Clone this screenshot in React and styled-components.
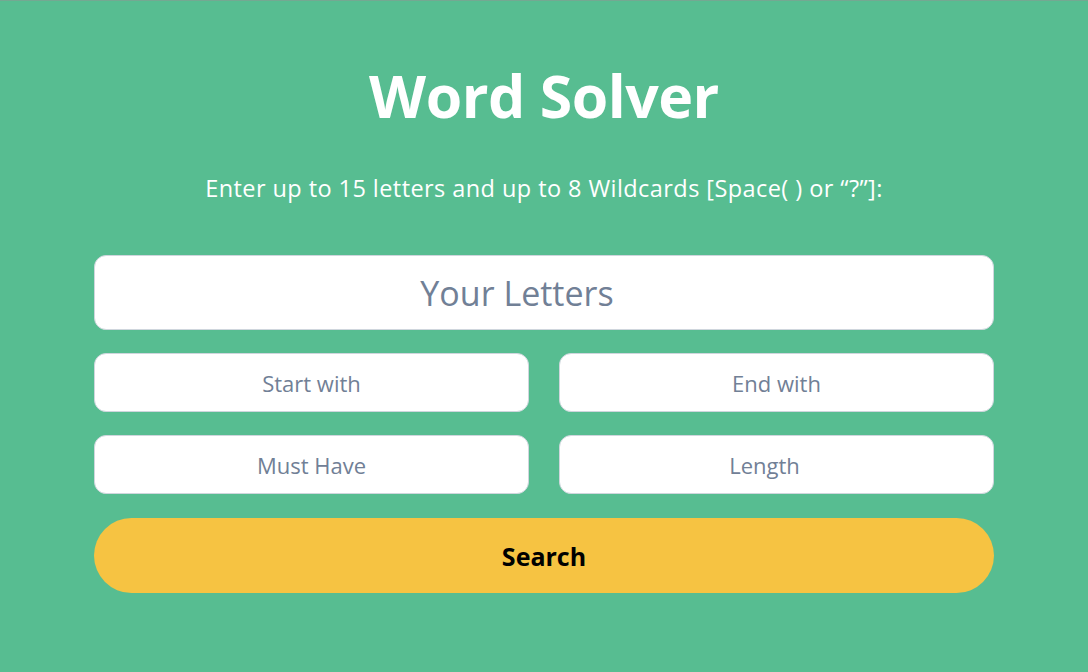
import React from "react";
import styled, { createGlobalStyle } from "styled-components";

const Global = createGlobalStyle`
  html, body { margin: 0; padding: 0; }
  body {
    background: #57bd91;
    font-family: "Open Sans", "Noto Sans", "Liberation Sans", sans-serif;
  }
  * { box-sizing: border-box; }
`;

const Page = styled.main`
  min-height: 672px;
  background: #57bd91;
  border-top: 1px solid #74a892;
  display: flex;
  flex-direction: column;
  align-items: center;
  padding-top: 54px;
`;

const Title = styled.h1`
  margin: 0;
  color: #ffffff;
  font-size: 59px;
  font-weight: 700;
  line-height: 80px;
  letter-spacing: -0.5px;
`;

const Subtitle = styled.p`
  margin: 38px 0 0;
  color: #ffffff;
  font-size: 23.5px;
  line-height: 30px;
  letter-spacing: 0.43px;
`;

const Form = styled.form`
  width: 900px;
  margin-top: 52px;
  display: flex;
  flex-direction: column;
  gap: 23px;
`;

const Row = styled.div`
  display: grid;
  grid-template-columns: 1fr 1fr;
  column-gap: 30px;
`;

const Field = styled.input`
  width: 100%;
  height: ${(p) => (p.$big ? "75px" : "59px")};
  border: 1px solid #cfd6dd;
  border-radius: 12px;
  background: #ffffff;
  text-align: center;
  font-family: inherit;
  font-size: ${(p) => (p.$big ? "34px" : "22px")};
  color: #2d3748;
  outline: none;
  padding: 0 ${(p) => 12 + (p.$shift || 0) * 2}px 0 12px;
  &::placeholder {
    color: #718096;
    opacity: 1;
  }
`;

const SearchButton = styled.button`
  width: 100%;
  height: 75px;
  margin-top: 1px;
  border: none;
  border-radius: 38px;
  background: #f6c342;
  color: #000000;
  font-family: inherit;
  font-size: 25px;
  font-weight: 700;
  cursor: pointer;
`;

export default function App() {
  return (
    <>
      <Global />
      <Page>
        <Title>Word Solver</Title>
        <Subtitle>
          Enter up to 15 letters and up to 8 Wildcards [Space( ) or “?”]:
        </Subtitle>
        <Form onSubmit={(e) => e.preventDefault()}>
          <Field $big $shift={27} placeholder="Your Letters" />
          <Row>
            <Field placeholder="Start with" />
            <Field placeholder="End with" />
          </Row>
          <Row>
            <Field placeholder="Must Have" />
            <Field $shift={12} placeholder="Length" />
          </Row>
          <SearchButton type="submit">Search</SearchButton>
        </Form>
      </Page>
    </>
  );
}
